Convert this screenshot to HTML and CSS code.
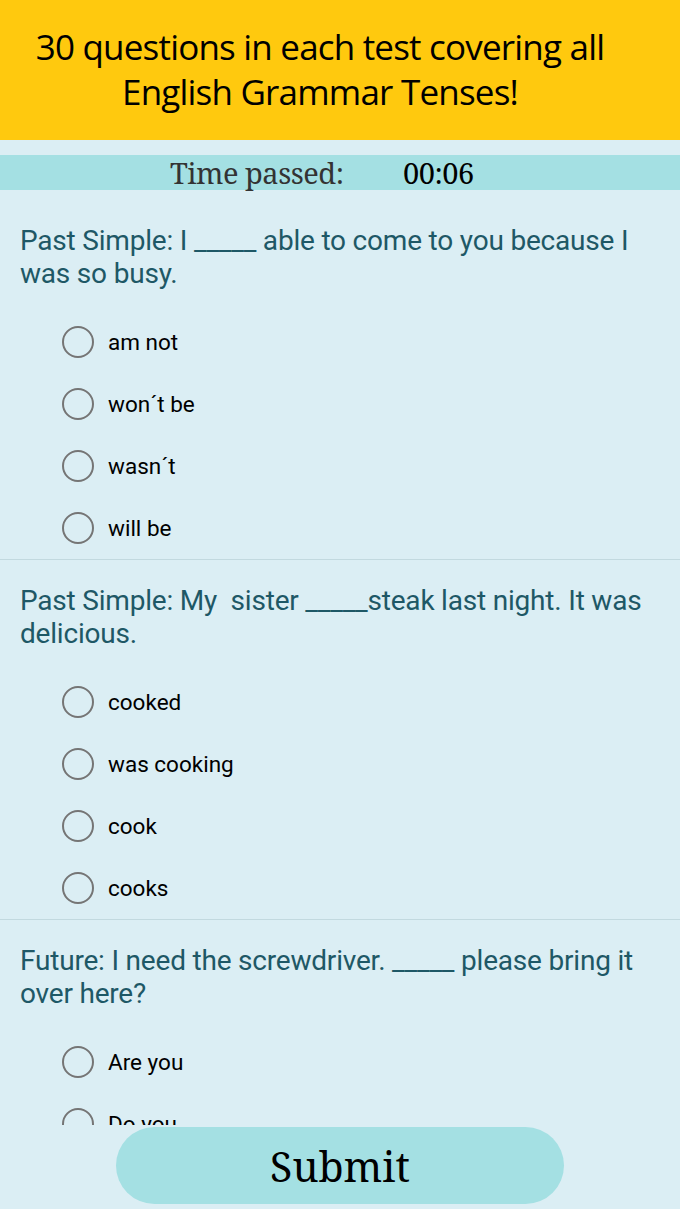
FILE: index.html
```html
<!DOCTYPE html>
<html>
<head>
<meta charset="utf-8">
<link rel="stylesheet" href="styles.css">
</head>
<body>
<div class="app">
  <header class="banner">
    <p>30 questions in each test covering all<br>English Grammar Tenses!</p>
  </header>
  <div class="timer">
    <span class="label">Time passed:</span>
    <span class="time">00:06</span>
  </div>
  <main class="quiz">
    <section class="question">
      <p class="q-text">Past Simple: I _____ able to come to you because I was so busy.</p>
      <ul class="options">
        <li><span class="radio"></span><span class="opt">am not</span></li>
        <li><span class="radio"></span><span class="opt">won´t be</span></li>
        <li><span class="radio"></span><span class="opt">wasn´t</span></li>
        <li><span class="radio"></span><span class="opt">will be</span></li>
      </ul>
    </section>
    <section class="question">
      <p class="q-text">Past Simple: My&nbsp; sister _____steak last night. It was delicious.</p>
      <ul class="options">
        <li><span class="radio"></span><span class="opt">cooked</span></li>
        <li><span class="radio"></span><span class="opt">was cooking</span></li>
        <li><span class="radio"></span><span class="opt">cook</span></li>
        <li><span class="radio"></span><span class="opt">cooks</span></li>
      </ul>
    </section>
    <section class="question">
      <p class="q-text">Future: I need the screwdriver. _____ please bring it over here?</p>
      <ul class="options">
        <li><span class="radio"></span><span class="opt">Are you</span></li>
        <li><span class="radio"></span><span class="opt">Do you</span></li>
      </ul>
    </section>
  </main>
  <div class="footer">
    <button class="submit">Submit</button>
  </div>
</div>
</body>
</html>
```

FILE: styles.css
```css
html, body {
  margin: 0;
  padding: 0;
  background: #dbeef4;
}
.app {
  width: 680px;
  height: 1209px;
  display: flex;
  flex-direction: column;
  overflow: hidden;
  background: #dbeef4;
}
.banner {
  background: #ffc90e;
  height: 140px;
  flex: none;
  box-sizing: border-box;
  padding-top: 24px;
}
.banner p {
  margin: 0;
  padding-right: 40px;
  text-align: center;
  font-family: "Open Sans", sans-serif;
  font-size: 35px;
  letter-spacing: -0.8px;
  line-height: 45px;
  color: #000;
}
.timer {
  flex: none;
  margin-top: 15px;
  height: 35px;
  background: #a4e0e3;
  display: flex;
  align-items: center;
  padding-left: 170px;
  font-family: "Noto Serif", "DejaVu Serif", serif;
  font-size: 29px;
  letter-spacing: -0.5px;
}
.timer .label {
  color: #333;
  width: 233px;
}
.timer .time {
  color: #000;
}
.quiz {
  flex: 1;
  overflow: hidden;
  min-height: 0;
  padding-top: 10px;
}
.question {
  border-bottom: 1px solid #c2d9df;
  padding-top: 24px;
  height: 360px;
  box-sizing: border-box;
}
.q-text {
  margin: 0;
  padding: 0 20px;
  font-family: Roboto, sans-serif;
  font-size: 28px;
  line-height: 33px;
  color: #1e5866;
  letter-spacing: -0.2px;
}
.options {
  list-style: none;
  margin: 21px 0 0 0;
  padding: 0 0 0 62px;
}
.options li {
  display: flex;
  align-items: center;
  height: 62px;
}
.radio {
  width: 28px;
  height: 28px;
  border: 2px solid #757575;
  border-radius: 50%;
  flex: none;
  margin-right: 14px;
}
.opt {
  font-family: Roboto, sans-serif;
  font-size: 22.5px;
  color: #000;
}
.footer {
  flex: none;
  height: 84px;
  display: flex;
  justify-content: center;
  padding-top: 2px;
  box-sizing: border-box;
}
.submit {
  width: 448px;
  height: 77px;
  border: none;
  border-radius: 39px;
  background: #a4e0e3;
  font-family: "Noto Serif", "DejaVu Serif", serif;
  font-size: 41px;
  color: #000;
  padding: 0;
}
```
